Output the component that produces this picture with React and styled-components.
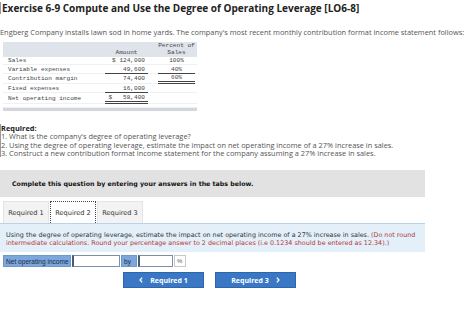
import React from 'react'
import styled, { createGlobalStyle } from 'styled-components'

const Global = createGlobalStyle`
    body {
        margin: 0;
        background: #fff;
        font-family: "Open Sans", "Liberation Sans", sans-serif;
        color: #333;
    }
`

const Page = styled.div`
    width: 474px;
    height: 333px;
    overflow: hidden;
    padding-top: 2px;
    box-sizing: border-box;
`

const Title = styled.h1`
    margin: 0;
    padding-left: 1px;
    border-left: 1px solid #999;
    font-size: 10px;
    line-height: 12px;
    font-weight: 700;
    color: #222;
`

const Intro = styled.p`
    margin: 13px 0 0 0;
    font-size: 7.4px;
    line-height: 10px;
    color: #555;
`

const Statement = styled.table`
    margin: 5px 0 0 3px;
    width: 194px;
    table-layout: fixed;
    border-collapse: separate;
    border-spacing: 0;
    font-family: "Liberation Mono", "DejaVu Sans Mono", monospace;
    font-size: 6.1px;
    color: #444;
    border-bottom: 3px solid #d3d6dc;
`

const HeadCell = styled.th`
    width: ${p => p.$w}px;
    background: #dfe3ea;
    font-weight: 400;
    line-height: 7px;
    height: 14px;
    padding: 0 0 1px 0;
    vertical-align: bottom;
    text-align: center;
    white-space: nowrap;
`

const Row = styled.tr`
    height: ${p => p.$h || 9}px;
`

const Label = styled.td`
    padding: 0 0 0 5px;
    line-height: 7px;
    white-space: nowrap;
    border-bottom: 1px solid #eef0f3;
`

const Num = styled.td`
    padding: 0 ${p => (p.$pct ? 0 : 3)}px 0 0;
    line-height: 7px;
    white-space: nowrap;
    text-align: ${p => (p.$pct ? 'center' : 'right')};
    border-bottom: ${p =>
        p.$double ? '3px double #444' : p.$rule ? '1px solid #444' : '1px solid #eef0f3'};
`

const Gap = styled.td`
    padding: 0;
    border-bottom: 1px solid #eef0f3;
`

const Required = styled.div`
    margin-top: 13px;
    font-size: 7.4px;
    line-height: 8.3px;
    color: #555;
    border-left: 1px solid #999;

    b {
        color: #222;
    }
`

const Prompt = styled.div`
    margin-top: 13px;
    width: 425px;
    height: 27px;
    background: #e2e2e2;
    display: flex;
    align-items: center;
    padding-left: 12px;
    box-sizing: border-box;
    font-family: "DejaVu Sans", Verdana, sans-serif;
    font-weight: 700;
    font-size: 6.3px;
    color: #111;
`

const Tabs = styled.div`
    display: flex;
    margin: 4px 0 0 3px;
    height: 22px;
`

const Tab = styled.div`
    width: 46px;
    display: flex;
    align-items: center;
    justify-content: center;
    font-family: "DejaVu Sans", Verdana, sans-serif;
    font-size: 6.6px;
    color: #333;
    box-sizing: border-box;
    background: ${p => (p.$active ? '#fff' : '#f3f3f3')};
    border: ${p => (p.$active ? '1px dotted #445' : '1px solid #e3e3e3')};
    border-bottom: none;
    margin-right: 1px;
`

const Info = styled.div`
    width: 425px;
    background: #e3eff9;
    border-top: 1px solid #b9d3ea;
    padding: 7px 6px 5px 6px;
    box-sizing: border-box;
    font-family: "DejaVu Sans", Verdana, sans-serif;
    font-size: 6.4px;
    line-height: 8px;
    color: #333;

    span {
        color: #b33a3a;
    }
`

const AnswerRow = styled.div`
    display: flex;
    align-items: stretch;
    margin: 3px 0 0 3px;
    height: 12px;
`

const Cell = styled.div`
    background: #7ba7dc;
    color: #1d2a44;
    font-family: "Liberation Sans", Arial, sans-serif;
    font-size: 6.6px;
    display: flex;
    align-items: center;
    padding-left: 2px;
    width: ${p => p.$w}px;
    box-sizing: border-box;
    border: 1px solid #6e98cc;
`

const Input = styled.div`
    width: ${p => p.$w}px;
    background: #fff;
    border: 1px solid #7a8fa8;
    border-left: 2px solid #4a5a70;
    box-sizing: border-box;
    margin: 0 1px;
`

const Unit = styled.div`
    width: 12px;
    background: #fff;
    border: 1px solid #c8c8c8;
    box-sizing: border-box;
    font-family: "Liberation Sans", Arial, sans-serif;
    font-size: 6px;
    color: #555;
    display: flex;
    align-items: center;
    padding-left: 2px;
`

const Nav = styled.div`
    display: flex;
    gap: 11px;
    margin: 5px 0 0 123px;
`

const NavButton = styled.div`
    width: 81px;
    height: 16px;
    background: #3a78c6;
    color: #fff;
    font-family: "Open Sans", "Liberation Sans", sans-serif;
    font-weight: 700;
    font-size: 7px;
    display: flex;
    align-items: center;
    justify-content: center;
    gap: 7px;
    box-sizing: border-box;
    border: 1px solid #2e66ad;
`

const Chevron = ({ dir }) => (
    <svg width="4" height="6" viewBox="0 0 4 6">
        <path
            d={dir === 'left' ? 'M3.2 0.6 L1 3 L3.2 5.4' : 'M0.8 0.6 L3 3 L0.8 5.4'}
            fill="none"
            stroke="#fff"
            strokeWidth="1.3"
        />
    </svg>
)

const lines = [
    { label: 'Sales', amount: '$ 124,000', pct: '100%', h: 8 },
    { label: 'Variable expenses', amount: '49,600', pct: '40%', aRule: true, pRule: true },
    { label: 'Contribution margin', amount: '74,400', pct: '60%', pDouble: true },
    { label: 'Fixed expenses', amount: '16,000', aRule: true },
    { label: 'Net operating income', amount: '$\u00a0\u00a0\u00a058,400', aDouble: true, h: 11 },
]

const App = () => {
    return (
        <Page>
            <Global />
            <Title>Exercise 6-9 Compute and Use the Degree of Operating Leverage [LO6-8]</Title>
            <Intro>
                Engberg Company installs lawn sod in home yards. The company's most recent monthly contribution format income statement follows:
            </Intro>

            <Statement>
                <thead>
                    <tr>
                        <HeadCell $w={102}></HeadCell>
                        <HeadCell $w={43}>Amount</HeadCell>
                        <HeadCell $w={10}></HeadCell>
                        <HeadCell $w={37}>Percent of<br />Sales</HeadCell>
                        <HeadCell $w={2}></HeadCell>
                    </tr>
                </thead>
                <tbody>
                    {lines.map(l => (
                        <Row key={l.label} $h={l.h}>
                            <Label>{l.label}</Label>
                            <Num $rule={l.aRule} $double={l.aDouble}>{l.amount}</Num>
                            <Gap />
                            <Num $pct $rule={l.pRule} $double={l.pDouble}>{l.pct}</Num>
                            <Gap />
                        </Row>
                    ))}
                    <Row $h={4}>
                        <Gap />
                        <Gap />
                        <Gap />
                        <Gap />
                        <Gap />
                    </Row>
                </tbody>
            </Statement>

            <Required>
                <b>Required:</b>
                <div>1. What is the company's degree of operating leverage?</div>
                <div>2. Using the degree of operating leverage, estimate the impact on net operating income of a 27% increase in sales.</div>
                <div>3. Construct a new contribution format income statement for the company assuming a 27% increase in sales.</div>
            </Required>

            <Prompt>Complete this question by entering your answers in the tabs below.</Prompt>

            <Tabs>
                <Tab>Required 1</Tab>
                <Tab $active>Required 2</Tab>
                <Tab>Required 3</Tab>
            </Tabs>

            <Info>
                Using the degree of operating leverage, estimate the impact on net operating income of a 27% increase in sales. <span>(Do not round intermediate calculations. Round your percentage answer to 2 decimal places (i.e 0.1234 should be entered as 12.34).)</span>
            </Info>

            <AnswerRow>
                <Cell $w={68}>Net operating income</Cell>
                <Input $w={48} />
                <Cell $w={16}>by</Cell>
                <Input $w={35} />
                <Unit>%</Unit>
            </AnswerRow>

            <Nav>
                <NavButton><Chevron dir="left" /> Required 1</NavButton>
                <NavButton>Required 3 <Chevron dir="right" /></NavButton>
            </Nav>
        </Page>
    )
}

export default App
